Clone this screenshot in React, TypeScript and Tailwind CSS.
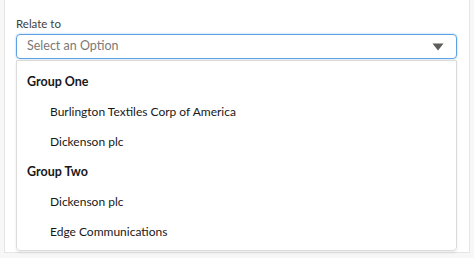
export default function App() {
  const groups = [
    { label: 'Group One', items: ['Burlington Textiles Corp of America', 'Dickenson plc'] },
    { label: 'Group Two', items: ['Dickenson plc', 'Edge Communications'] },
  ];

  return (
    <div className="w-[474px] h-[258px] bg-[#f7f7f7] overflow-hidden" style={{ fontFamily: 'Lato, "Open Sans", sans-serif' }}>
      <div className="ml-[4px] w-[466px] h-[253px] bg-white border-x border-b border-[#e6e6e6] pt-[15px] pl-[11px]">
        <label className="block text-[11.5px] leading-[18px] text-[#3e3e3c] mb-[1px]">Relate to</label>
        <div className="relative w-[441px]">
          <div className="h-[25px] rounded-[4px] border border-[#5ea2e3] shadow-[0_0_2px_#8cc3f2] flex items-center pl-[10px] pr-[10px] justify-between">
            <span className="text-[12.5px] text-[#7b7977]">Select an Option</span>
            <svg width="12" height="8" viewBox="0 0 12 8" className="mr-[2px]">
              <path d="M0.5 0.5 L11.5 0.5 L6 7.5 Z" fill="#5f5d5b" />
            </svg>
          </div>
          <div className="mt-[1px] h-[191px] rounded-b-[4px] border border-[#dddbda] pt-[6px] shadow-[0_2px_3px_rgba(0,0,0,0.08)]">
            {groups.map((g) => (
              <div key={g.label}>
                <div className="h-[30px] flex items-center pl-[10px] text-[12.5px] font-bold text-[#181818]">{g.label}</div>
                {g.items.map((it, i) => (
                  <div key={i} className="h-[30px] flex items-center pl-[33px] text-[12px] text-[#181818]">{it}</div>
                ))}
              </div>
            ))}
          </div>
        </div>
      </div>
    </div>
  );
}
